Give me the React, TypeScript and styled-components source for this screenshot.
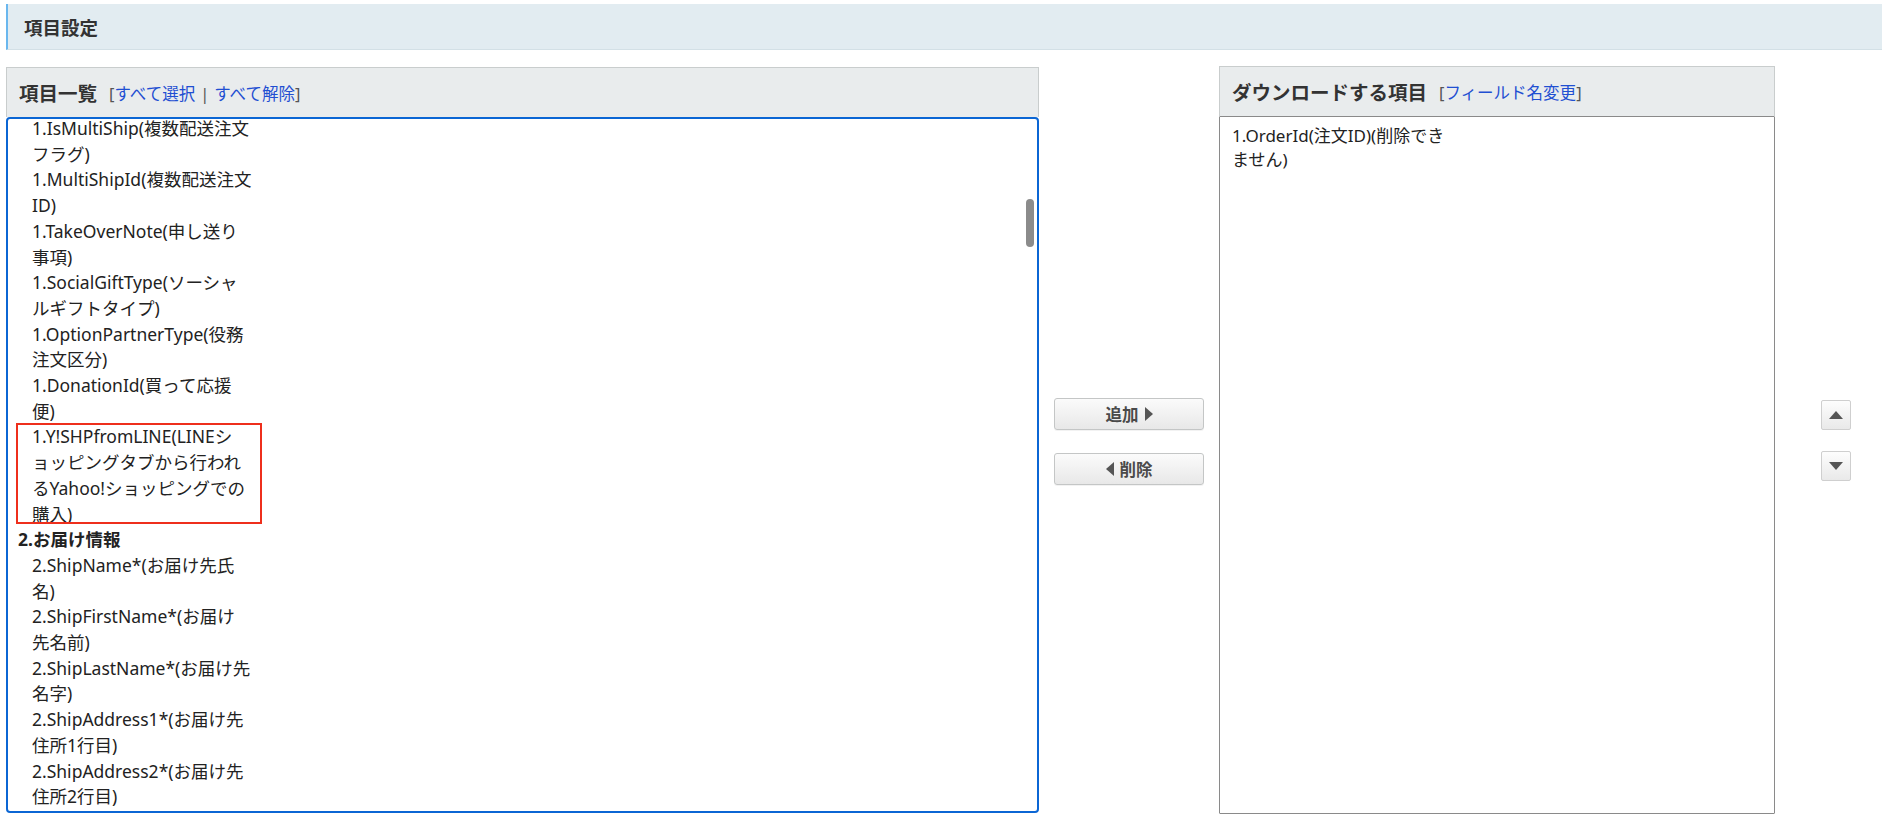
import React from "react";
import styled, { createGlobalStyle } from "styled-components";

const GlobalStyle = createGlobalStyle`
  html, body {
    margin: 0;
    padding: 0;
    background: #fff;
  }
  body {
    font-family: "Noto Sans", "Noto Sans CJK JP", sans-serif;
    color: #222;
  }
`;

type Field = {
  lines: string[];
  marked?: boolean;
};

type Group = {
  title?: string;
  fields: Field[];
};

const groups: Group[] = [
  {
    fields: [
      { lines: ["1.IsMultiShip(複数配送注文", "フラグ)"] },
      { lines: ["1.MultiShipId(複数配送注文", "ID)"] },
      { lines: ["1.TakeOverNote(申し送り", "事項)"] },
      { lines: ["1.SocialGiftType(ソーシャ", "ルギフトタイプ)"] },
      { lines: ["1.OptionPartnerType(役務", "注文区分)"] },
      { lines: ["1.DonationId(買って応援", "便)"] },
      {
        lines: [
          "1.Y!SHPfromLINE(LINEシ",
          "ョッピングタブから行われ",
          "るYahoo!ショッピングでの",
          "購入)",
        ],
        marked: true,
      },
    ],
  },
  {
    title: "2.お届け情報",
    fields: [
      { lines: ["2.ShipName*(お届け先氏", "名)"] },
      { lines: ["2.ShipFirstName*(お届け", "先名前)"] },
      { lines: ["2.ShipLastName*(お届け先", "名字)"] },
      { lines: ["2.ShipAddress1*(お届け先", "住所1行目)"] },
      { lines: ["2.ShipAddress2*(お届け先", "住所2行目)"] },
    ],
  },
];

const Page = styled.div`
  padding: 4px 0 0 6px;
`;

const TitleBar = styled.div`
  height: 46px;
  box-sizing: border-box;
  display: flex;
  align-items: center;
  padding-left: 16px;
  background: #e2ecf1;
  border-left: 2px solid #6ab7ee;
  border-bottom: 1px solid #d3e0e6;
  font-size: 18.5px;
  font-weight: 700;
  color: #333;
`;

const Body = styled.div`
  display: flex;
  align-items: center;
  margin-top: 16px;
`;

const Panel = styled.div<{ $width: number; $height: number }>`
  width: ${(p) => p.$width}px;
  height: ${(p) => p.$height}px;
  display: flex;
  flex-direction: column;
  flex-shrink: 0;
`;

const PanelHeader = styled.div`
  height: 50px;
  box-sizing: border-box;
  display: flex;
  align-items: center;
  gap: 12px;
  padding: 0 12px;
  background: #e9eced;
  border: 1px solid #c9cdcd;
  border-bottom: none;
`;

const PanelTitle = styled.span`
  font-size: 19.5px;
  font-weight: 700;
  color: #333;
`;

const Links = styled.span`
  font-size: 16.5px;
  color: #555;
`;

const Link = styled.a`
  color: #1f4fd2;
  text-decoration: none;
  cursor: pointer;
`;

const Sep = styled.span`
  margin: 0 5px;
  color: #555;
`;

const ListBox = styled.div<{ $focused?: boolean }>`
  position: relative;
  flex: 1;
  overflow: hidden;
  box-sizing: border-box;
  border: ${(p) => (p.$focused ? "2px solid #0b66d4" : "1px solid #8a8a8a")};
  border-radius: ${(p) => (p.$focused ? "4px" : "1px")};
  padding: ${(p) => (p.$focused ? "0 10px" : "7px 12px")};
  font-size: ${(p) => (p.$focused ? "17.5px" : "17px")};
  line-height: ${(p) => (p.$focused ? "25.7px" : "24px")};
  color: #222;
  background: #fff;
`;

const ListInner = styled.div`
  margin-top: -3px;
`;

const GroupTitle = styled.div`
  font-weight: 700;
  white-space: nowrap;
`;

const Item = styled.div<{ $marked?: boolean }>`
  position: relative;
  padding-left: 14px;
  white-space: nowrap;

  ${(p) =>
    p.$marked &&
    `
    &::after {
      content: "";
      position: absolute;
      left: -2px;
      top: -1px;
      width: 246px;
      height: 101px;
      box-sizing: border-box;
      border: 2px solid #ee2f1c;
    }
  `}
`;

const Line = styled.div``;

const Thumb = styled.div`
  position: absolute;
  right: 3px;
  top: 80px;
  width: 8px;
  height: 48px;
  border-radius: 4px;
  background: #8b8b8b;
`;

const Middle = styled.div`
  width: 180px;
  flex-shrink: 0;
  display: flex;
  flex-direction: column;
  align-items: center;
  gap: 23px;
  padding-top: 2px;
`;

const MoveButton = styled.button`
  width: 150px;
  height: 32px;
  display: flex;
  align-items: center;
  justify-content: center;
  gap: 6px;
  padding: 0;
  border: 1px solid #c4c6c6;
  border-radius: 3px;
  background: linear-gradient(#fbfbfb, #e8e8e8);
  box-shadow: 0 1px 0 rgba(0, 0, 0, 0.05);
  font-family: "Noto Sans CJK JP", sans-serif;
  font-size: 16.5px;
  font-weight: 700;
  color: #4a4a4a;
  cursor: pointer;
`;

const Tri = styled.span<{ $dir: "left" | "right" | "up" | "down" }>`
  display: inline-block;
  width: 0;
  height: 0;
  ${(p) =>
    p.$dir === "right"
      ? "border-top: 7px solid transparent; border-bottom: 7px solid transparent; border-left: 8px solid #555;"
      : p.$dir === "left"
      ? "border-top: 7px solid transparent; border-bottom: 7px solid transparent; border-right: 8px solid #555;"
      : p.$dir === "up"
      ? "border-left: 7px solid transparent; border-right: 7px solid transparent; border-bottom: 8px solid #555;"
      : "border-left: 7px solid transparent; border-right: 7px solid transparent; border-top: 8px solid #555;"}
`;

const Arrows = styled.div`
  display: flex;
  flex-direction: column;
  gap: 21px;
  margin-left: 46px;
  padding-top: 1px;
`;

const ArrowButton = styled.button`
  width: 30px;
  height: 30px;
  display: flex;
  align-items: center;
  justify-content: center;
  padding: 0;
  border: 1px solid #cfcfcf;
  border-radius: 2px;
  background: linear-gradient(#fdfdfd, #e9e9e9);
  cursor: pointer;
`;

export default function App() {
  return (
    <Page>
      <GlobalStyle />
      <TitleBar>項目設定</TitleBar>
      <Body>
        <Panel $width={1033} $height={746}>
          <PanelHeader>
            <PanelTitle>項目一覧</PanelTitle>
            <Links>
              [<Link>すべて選択</Link>
              <Sep>|</Sep>
              <Link>すべて解除</Link>]
            </Links>
          </PanelHeader>
          <ListBox $focused>
            <ListInner>
              {groups.map((g, gi) => (
                <React.Fragment key={gi}>
                  {g.title && <GroupTitle>{g.title}</GroupTitle>}
                  {g.fields.map((f, fi) => (
                    <Item key={fi} $marked={f.marked}>
                      {f.lines.map((l, li) => (
                        <Line key={li}>{l}</Line>
                      ))}
                    </Item>
                  ))}
                </React.Fragment>
              ))}
            </ListInner>
            <Thumb />
          </ListBox>
        </Panel>

        <Middle>
          <MoveButton>
            追加 <Tri $dir="right" />
          </MoveButton>
          <MoveButton>
            <Tri $dir="left" /> 削除
          </MoveButton>
        </Middle>

        <Panel $width={556} $height={748}>
          <PanelHeader>
            <PanelTitle>ダウンロードする項目</PanelTitle>
            <Links>
              [<Link>フィールド名変更</Link>]
            </Links>
          </PanelHeader>
          <ListBox>
            <Line>1.OrderId(注文ID)(削除でき</Line>
            <Line>ません)</Line>
          </ListBox>
        </Panel>

        <Arrows>
          <ArrowButton>
            <Tri $dir="up" />
          </ArrowButton>
          <ArrowButton>
            <Tri $dir="down" />
          </ArrowButton>
        </Arrows>
      </Body>
    </Page>
  );
}
